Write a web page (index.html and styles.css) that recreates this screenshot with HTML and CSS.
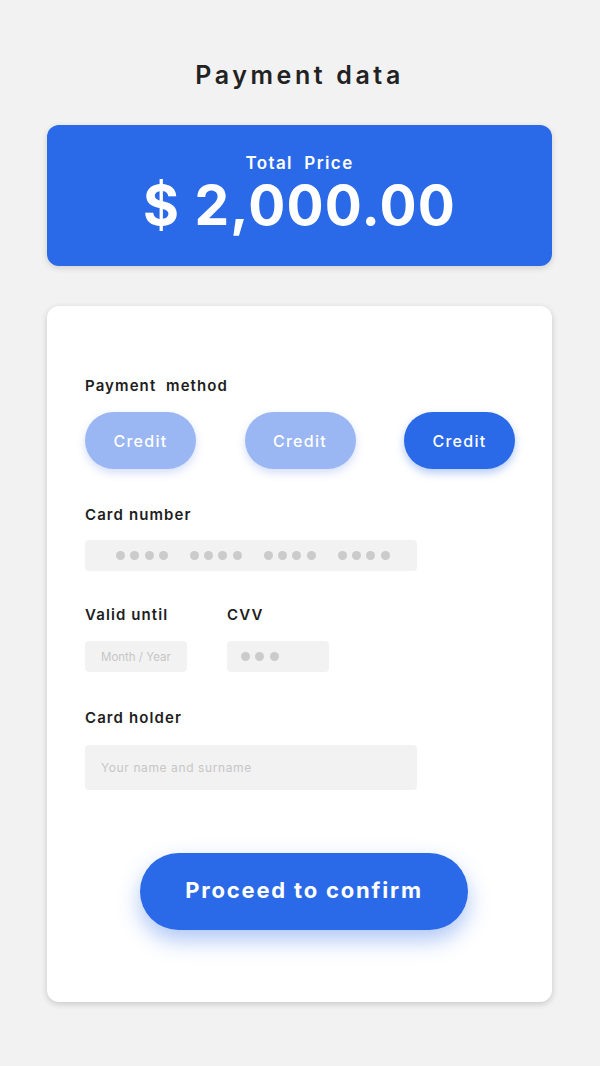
FILE: index.html
```html
<!DOCTYPE html>
<html>
<head>
<meta charset="utf-8">
<link rel="stylesheet" href="styles.css">
</head>
<body>
<div class="page">
  <h1 class="title">Payment data</h1>
  <div class="total">
    <div class="total-label">Total&nbsp; Price</div>
    <div class="total-amount">$ 2,000.00</div>
  </div>
  <div class="form-card">
    <div class="label">Payment&nbsp; method</div>
    <div class="methods">
      <div class="pill pill-light">Credit</div>
      <div class="pill pill-light">Credit</div>
      <div class="pill pill-active">Credit</div>
    </div>
    <div class="label gap-lg">Card number</div>
    <div class="input input-card">
      <div class="group"><span class="dot"></span><span class="dot"></span><span class="dot"></span><span class="dot"></span></div>
      <div class="group"><span class="dot"></span><span class="dot"></span><span class="dot"></span><span class="dot"></span></div>
      <div class="group"><span class="dot"></span><span class="dot"></span><span class="dot"></span><span class="dot"></span></div>
      <div class="group"><span class="dot"></span><span class="dot"></span><span class="dot"></span><span class="dot"></span></div>
    </div>
    <div class="row gap-lg">
      <div class="col">
        <div class="label">Valid until</div>
        <div class="input input-small"><span class="placeholder">Month / Year</span></div>
      </div>
      <div class="col">
        <div class="label">CVV</div>
        <div class="input input-small input-cvv">
          <div class="group"><span class="dot"></span><span class="dot"></span><span class="dot"></span></div>
        </div>
      </div>
    </div>
    <div class="label gap-lg">Card holder</div>
    <div class="input input-name"><span class="placeholder">Your name and surname</span></div>
    <div class="submit-wrap">
      <div class="submit">Proceed to confirm</div>
    </div>
  </div>
</div>
</body>
</html>
```

FILE: styles.css
```css
* { box-sizing: border-box; }
html, body { margin: 0; padding: 0; }
body {
  background: #f2f2f2;
  font-family: "Inter", "Noto Sans", "Liberation Sans", sans-serif;
  color: #1e1e1e;
  width: 600px;
  height: 1066px;
  overflow: hidden;
}
.page {
  padding: 60px 48px 0 47px;
}
.title {
  margin: 0;
  font-size: 25px;
  line-height: 30px;
  font-weight: 600;
  letter-spacing: 3.6px;
  text-align: center;
  color: #222;
}
.total {
  margin-top: 35px;
  height: 141px;
  background: #2a6ae8;
  border-radius: 12px;
  box-shadow: 0 2px 6px rgba(0,0,0,0.15);
  color: #fff;
  text-align: center;
  padding-top: 27px;
}
.total-label {
  font-size: 17px;
  line-height: 22px;
  font-weight: 600;
  letter-spacing: 1.4px;
}
.total-amount {
  font-size: 55px;
  line-height: 60px;
  font-weight: 700;
  letter-spacing: 1.2px;
  margin-top: 1px;
}
.form-card {
  margin-top: 40px;
  height: 696px;
  background: #fff;
  border-radius: 12px;
  box-shadow: 0 2px 6px rgba(0,0,0,0.18);
  padding: 70px 37px 0 38px;
}
.label {
  font-size: 15px;
  line-height: 20px;
  font-weight: 600;
  color: #1e1e1e;
  letter-spacing: 1.1px;
}
.gap-lg { margin-top: 36px; }
.methods {
  display: flex;
  justify-content: space-between;
  margin-top: 16px;
}
.pill {
  width: 111px;
  height: 57px;
  border-radius: 29px;
  display: flex;
  align-items: center;
  justify-content: center;
  color: #fff;
  font-size: 16px;
  font-weight: 500;
  letter-spacing: 1.3px;
}
.pill-light {
  background: #9ab6f3;
  box-shadow: 0 4px 8px rgba(120,150,240,0.3);
}
.pill-active {
  background: #2a6ae8;
  box-shadow: 0 4px 8px rgba(42,106,232,0.35);
}
.input {
  background: #f2f2f2;
  border-radius: 4px;
  display: flex;
  align-items: center;
}
.input-card {
  margin-top: 15px;
  width: 332px;
  height: 31px;
  padding-left: 31px;
  gap: 22px;
}
.group {
  display: flex;
  gap: 5.3px;
}
.dot {
  width: 9px;
  height: 9px;
  border-radius: 50%;
  background: #cbcbcb;
}
.row {
  display: flex;
  gap: 40px;
  margin-top: 34px;
}
.row .input { margin-top: 16px; }
.input-small {
  width: 102px;
  height: 31px;
  padding-left: 16px;
}
.input-cvv { padding-left: 14px; }
.placeholder {
  font-size: 11.5px;
  color: #c6c6c6;
}
.input-name {
  margin-top: 17px;
  width: 332px;
  height: 45px;
  padding-left: 16px;
}
.input-name .placeholder { font-size: 12px; letter-spacing: 0.6px; }
.submit-wrap {
  display: flex;
  padding-left: 55px;
  margin-top: 63px;
}
.submit {
  width: 328px;
  height: 77px;
  border-radius: 39px;
  background: #2a6ae8;
  box-shadow: 0 10px 22px rgba(42,106,232,0.38);
  color: #fff;
  font-size: 22px;
  font-weight: 700;
  letter-spacing: 1.8px;
  display: flex;
  align-items: center;
  justify-content: center;
  padding-bottom: 3px;
}
```
